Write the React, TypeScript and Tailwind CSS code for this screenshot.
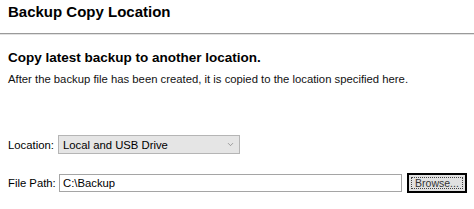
import { ChevronDown } from "lucide-react";

export default function App() {
  return (
    <div className="w-[474px] h-[209px] bg-white overflow-hidden text-black font-['Liberation_Sans',Arial,sans-serif]">
      {/* Header */}
      <div className="h-[33px] pl-2 pt-[3px]">
        <h1 className="text-[15px] leading-[17px] font-bold">Backup Copy Location</h1>
      </div>
      <div className="h-px bg-[#9a9a9a]" />
      <div className="h-px bg-[#e2e2e2]" />

      {/* Body */}
      <div className="pl-2">
        <p className="mt-[15px] text-[13.5px] leading-4 font-bold">Copy latest backup to another location.</p>
        <p className="mt-[6px] text-[11.3px] leading-[14px] text-[#111]">
          After the backup file has been created, it is copied to the location specified here.
        </p>

        <div className="mt-[49px] flex items-center gap-1 h-[19px]">
          <span className="text-[11.3px] leading-[14px] w-[46px]">Location:</span>
          <div className="w-[182px] h-[19px] flex items-center justify-between pl-[4px] pr-[4px] bg-[#e5e5e5] border border-[#b5b5b5]">
            <span className="text-[11.3px] leading-[14px]">Local and USB Drive</span>
            <ChevronDown className="w-[9px] h-[9px] text-[#666]" strokeWidth={1.5} />
          </div>
        </div>

        <div className="mt-[19px] flex items-center h-[20px]">
          <span className="text-[11.3px] leading-[14px] w-[51px]">File Path:</span>
          <div className="w-[343px] h-[18px] flex items-center pl-[3px] border border-[#a5a5a5] bg-white">
            <span className="text-[11.3px] leading-[14px]">C:\Backup</span>
          </div>
          <div className="ml-[5px] w-[60px] h-[20px] border-2 border-black bg-[#e1e1e1] p-[2px]">
            <div className="w-full h-full border border-dotted border-[#444] flex items-center justify-center">
              <span className="text-[10.5px] leading-[12px] text-[#333]">Browse...</span>
            </div>
          </div>
        </div>
      </div>
    </div>
  );
}
